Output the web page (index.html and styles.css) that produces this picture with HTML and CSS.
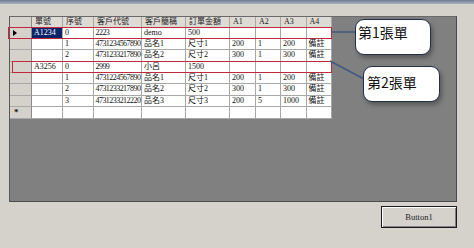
FILE: index.html
```html
<!DOCTYPE html>
<html>
<head>
<meta charset="utf-8">
<link rel="stylesheet" href="styles.css">
</head>
<body>
<div class="form">
  <div class="titlebar"></div>
  <div class="content">
    <div class="grid">
      <div class="table">
        <div class="rh hd"></div><div class="hd">單號</div><div class="hd">序號</div><div class="hd">客戶代號</div><div class="hd">客戶簡稱</div><div class="hd">訂單金額</div><div class="hd">A1</div><div class="hd">A2</div><div class="hd">A3</div><div class="hd">A4</div>

        <div class="rh"><span class="arrow"></span></div><div class="sel">A1234</div><div>0</div><div class="code">2223</div><div>demo</div><div>500</div><div></div><div></div><div></div><div></div>

        <div class="rh"></div><div></div><div>1</div><div class="code">4731234567890</div><div>品名1</div><div>尺寸1</div><div>200</div><div>1</div><div>200</div><div>備註</div>

        <div class="rh"></div><div></div><div>2</div><div class="code">4731233217890</div><div>品名2</div><div>尺寸2</div><div>300</div><div>1</div><div>300</div><div>備註</div>

        <div class="rh"></div><div>A3256</div><div>0</div><div class="code">2999</div><div>小呂</div><div>1500</div><div></div><div></div><div></div><div></div>

        <div class="rh"></div><div></div><div>1</div><div class="code">4731224567890</div><div>品名1</div><div>尺寸1</div><div>200</div><div>1</div><div>200</div><div>備註</div>

        <div class="rh"></div><div></div><div>2</div><div class="code">4731233217890</div><div>品名2</div><div>尺寸2</div><div>300</div><div>1</div><div>300</div><div>備註</div>

        <div class="rh"></div><div></div><div>3</div><div class="code">4731233212220</div><div>品名3</div><div>尺寸3</div><div>200</div><div>5</div><div>1000</div><div>備註</div>

        <div class="rh star">*</div><div></div><div></div><div></div><div></div><div></div><div></div><div></div><div></div><div></div>
      </div>
    </div>
    <div class="actions">
      <button class="btn">Button1</button>
    </div>
  </div>

  <div class="mark mark1"></div>
  <div class="mark mark2"></div>
  <svg class="connectors" width="474" height="248" viewBox="0 0 474 248">
    <line x1="332" y1="32" x2="356" y2="32" stroke="#3f5a82" stroke-width="1.5"/>
    <line x1="330" y1="61" x2="364" y2="79" stroke="#3f5a82" stroke-width="1.5"/>
  </svg>
  <div class="callout callout1">第1張單</div>
  <div class="callout callout2">第2張單</div>
</div>
</body>
</html>
```

FILE: styles.css
```css
html, body {
  margin: 0;
  padding: 0;
}
body {
  width: 474px;
  height: 248px;
  overflow: hidden;
  font-family: "Liberation Serif", "Noto Sans CJK TC", serif;
}
.form {
  position: relative;
  width: 474px;
  height: 248px;
  background: #d5d2cc;
}
.titlebar {
  height: 4px;
  background: linear-gradient(#6c7a90, #aab2c0);
}
.content {
  padding: 12px 17px 0 9px;
}
.grid {
  box-sizing: border-box;
  width: 448px;
  height: 186px;
  background: #808080;
  border: 1px solid #4a4a4a;
  border-top-color: #6a6a6a;
  border-left-color: #5a5a5a;
}
.table {
  display: grid;
  width: max-content;
  grid-template-columns: 22px 31px 31px 48px 44px 44px 26px 25px 25.5px 25.5px;
  grid-template-rows: 10.5px repeat(8, 11.4px);
  background: #fff;
}
.table > div {
  box-sizing: border-box;
  border-right: 1px solid #a8a8a8;
  border-bottom: 1px solid #a8a8a8;
  padding-left: 2px;
  font-size: 8px;
  line-height: 10.5px;
  color: #111;
  white-space: nowrap;
  overflow: hidden;
}
.table > .code {
  letter-spacing: -0.55px;
  padding-left: 1.5px;
}
.table > .hd {
  background: #dedbd5;
  font-size: 8px;
  line-height: 10px;
  padding-left: 3px;
  color: #222;
}
.table > .rh {
  background: #d5d2cc;
  border-right-color: #8a8a8a;
  display: flex;
  align-items: center;
  padding-left: 3px;
}
.table > .sel {
  background: #0a246a;
  color: #fff;
}
.arrow {
  width: 0;
  height: 0;
  border-top: 3px solid transparent;
  border-bottom: 3px solid transparent;
  border-left: 4px solid #000;
}
.table > .star {
  font-size: 9px;
  font-weight: bold;
  padding-left: 4px;
}
.actions {
  display: flex;
  justify-content: flex-end;
  margin-top: 4px;
}
.btn {
  box-sizing: border-box;
  width: 76px;
  height: 21.5px;
  padding: 0;
  background: #d5d2cc;
  border: 1px solid #1a1a1a;
  box-shadow: inset 1px 1px 0 #ffffff, inset -1px -1px 0 #808080;
  font-family: "Liberation Serif", serif;
  font-size: 8.5px;
  color: #222;
}
.mark {
  position: absolute;
  box-sizing: border-box;
  border: 1.5px solid #c0283c;
}
.mark1 {
  left: 8px;
  top: 26.5px;
  width: 324px;
  height: 12.5px;
}
.mark2 {
  left: 11.5px;
  top: 60.5px;
  width: 320.5px;
  height: 12px;
}
.connectors {
  position: absolute;
  left: 0;
  top: 0;
}
.callout {
  position: absolute;
  box-sizing: border-box;
  background: #fff;
  border: 1.5px solid #24304a;
  border-radius: 9px;
  box-shadow: 2px 3px 4px rgba(40, 40, 40, 0.45);
  font-family: "Noto Sans CJK TC", sans-serif;
  font-size: 14px;
  line-height: 16px;
  color: #111;
  padding: 4px 0 0 2px;
}
.callout1 {
  left: 355px;
  top: 19px;
  width: 76px;
  height: 36px;
}
.callout2 {
  left: 363px;
  top: 66px;
  width: 77px;
  height: 36px;
  padding-top: 7px;
  padding-left: 3px;
}
```
